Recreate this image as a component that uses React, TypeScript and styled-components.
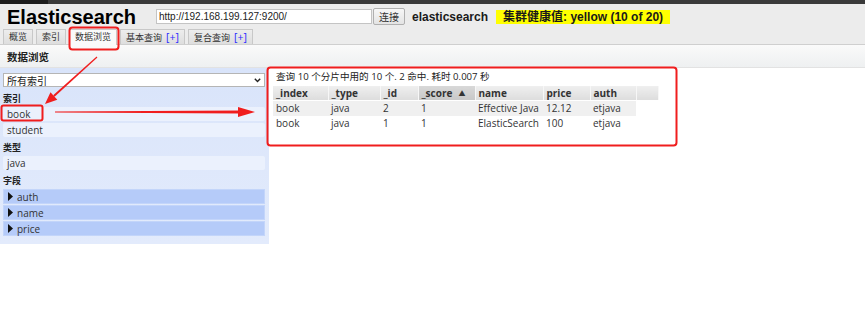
import React from "react";
import styled, { createGlobalStyle } from "styled-components";

const GlobalStyle = createGlobalStyle`
  html, body { margin: 0; padding: 0; background: #fff; }
  body { font-family: "Open Sans", "Noto Sans CJK SC", sans-serif; color: #333; }
  * { box-sizing: border-box; }
`;

const Page = styled.div`
  position: relative;
  width: 865px;
  height: 310px;
  overflow: hidden;
  background: #fff;
`;

const TopStrip = styled.div`
  height: 4px;
  background: linear-gradient(to right, #1d1d1d 0, #1d1d1d 48px, #3a3a3a 48px);
`;

const Header = styled.header`
  background: #ececec;
  height: 40px;
  display: flex;
  flex-direction: column;
`;

const HeaderRow = styled.div`
  display: flex;
  align-items: center;
  height: 25px;
  padding-left: 7px;
`;

const Brand = styled.h1`
  margin: 0;
  font-family: "Liberation Sans", Arial, sans-serif;
  font-weight: bold;
  font-size: 20px;
  line-height: 20px;
  color: #000;
`;

const UrlInput = styled.input`
  margin-left: 20px;
  width: 216px;
  height: 15px;
  border: 1px solid #c4c4c4;
  background: #fff;
  padding: 0 2px;
  font-family: "Liberation Sans", Arial, sans-serif;
  font-size: 10px;
  color: #222;
  outline: none;
`;

const ConnectButton = styled.button`
  margin-left: 1px;
  width: 32px;
  height: 17px;
  padding: 0;
  border: 1px solid #b0b0b0;
  border-radius: 2px;
  background: linear-gradient(#f7f7f7, #e4e4e4);
  font-family: "Noto Sans CJK SC", sans-serif;
  font-size: 10px;
  color: #333;
`;

const ClusterName = styled.span`
  margin-left: 7px;
  font-family: "Liberation Sans", Arial, sans-serif;
  font-weight: bold;
  font-size: 12px;
  color: #1a1a1a;
`;

const Health = styled.span`
  margin-left: 8px;
  height: 14px;
  line-height: 14px;
  padding: 0 7px;
  background: #ffff00;
  font-family: "Liberation Sans", Arial, "Noto Sans CJK SC", sans-serif;
  font-weight: bold;
  font-size: 12px;
  color: #1a1a1a;
`;

const TabRow = styled.nav`
  display: flex;
  align-items: flex-end;
  gap: 3px;
  height: 15px;
  padding-left: 3px;
`;

const Tab = styled.div<{ $active?: boolean }>`
  position: relative;
  height: ${(p) => (p.$active ? 16 : 15)}px;
  margin-bottom: ${(p) => (p.$active ? -1 : 0)}px;
  padding: 0 5px;
  border: 1px solid #c8c8c8;
  border-bottom: none;
  background: ${(p) => (p.$active ? "#fafafa" : "linear-gradient(#ededed, #dedede)")};
  font-size: 9px;
  line-height: 14px;
  color: #333;
  white-space: nowrap;
`;

const Plus = styled.span`
  margin-left: 4px;
  font-size: 10.5px;
  color: #2a2aff;
`;

const Band = styled.div`
  height: 24px;
  border-top: 1px solid #cfcfcf;
  border-bottom: 1px solid #e2e2e2;
  background: linear-gradient(#fafafa, #eef0f1);
  display: flex;
  align-items: center;
  padding-left: 7px;
`;

const BandTitle = styled.h2`
  margin: 0;
  font-size: 10.5px;
  font-weight: bold;
  color: #222;
`;

const Body = styled.div`
  display: flex;
  align-items: flex-start;
`;

const Sidebar = styled.aside`
  width: 269px;
  padding: 5px 4px 8px 3px;
  background: linear-gradient(#d9e4fa, #e3ebfc);
  display: flex;
  flex-direction: column;
`;

const SelectBox = styled.div`
  height: 14px;
  margin-bottom: 1px;
  background: #fff;
  border: 1px solid #b5b5b5;
  display: flex;
  align-items: center;
  justify-content: space-between;
  padding: 0 3px 0 3px;
  font-size: 10px;
  color: #222;
`;

const GroupTitle = styled.div`
  height: 19px;
  line-height: 19px;
  padding-top: 1px;
  font-size: 9px;
  font-weight: bold;
  color: #222;
`;

const Item = styled.div<{ $first?: boolean }>`
  height: 14px;
  line-height: 14px;
  margin-top: ${(p) => (p.$first ? 0 : 2)}px;
  padding-left: 4px;
  background: #ebf1fd;
  border-radius: 2px;
  font-size: 10px;
  color: #333;
`;

const FieldItem = styled.div<{ $first?: boolean }>`
  height: 15px;
  margin-top: ${(p) => (p.$first ? 0 : 1)}px;
  padding-left: 4px;
  background: #b5cbf9;
  border: 1px solid #c3d5fa;
  display: flex;
  align-items: center;
  gap: 4px;
  font-size: 10px;
  color: #333;
`;

const Main = styled.main`
  flex: 1;
  padding: 3px 0 0 4px;
`;

const Summary = styled.div`
  padding-left: 3px;
  height: 12px;
  line-height: 12px;
  font-size: 9.6px;
  color: #222;
  white-space: nowrap;
`;

const Table = styled.table`
  margin-top: 3px;
  border-collapse: collapse;
  table-layout: fixed;
  width: 385px;
`;

const Th = styled.th<{ $sorted?: boolean }>`
  height: 14px;
  padding: 0 3px;
  text-align: left;
  font-size: 10px;
  font-weight: bold;
  color: #333;
  white-space: nowrap;
  background: ${(p) => (p.$sorted ? "linear-gradient(#d8d8d8, #c8c8c8)" : "linear-gradient(#efefef, #dddddd)")};
  border-right: 1px solid #f7f7f7;
  border-bottom: 1px solid #fff;
`;

const SortMark = styled.span`
  margin-left: 6px;
  font-size: 7px;
  vertical-align: 1px;
`;

const Td = styled.td<{ $shaded?: boolean }>`
  height: 15px;
  padding: 0 3px;
  font-size: 10px;
  color: #333;
  white-space: nowrap;
  overflow: hidden;
  background: ${(p) => (p.$shaded ? "#f0f0f0" : "#fff")};
`;

const Overlay = styled.svg`
  position: absolute;
  left: 0;
  top: 0;
  pointer-events: none;
`;

const Chevron = () => (
  <svg width="7" height="5" viewBox="0 0 7 5">
    <path d="M0.8 0.8 L3.5 3.6 L6.2 0.8" fill="none" stroke="#222" strokeWidth="1.4" />
  </svg>
);

const Caret = () => (
  <svg width="5" height="9" viewBox="0 0 5 9">
    <path d="M0 0 L5 4.5 L0 9 Z" fill="#111" />
  </svg>
);

const columns = [
  { key: "_index", w: 55 },
  { key: "_type", w: 52 },
  { key: "_id", w: 38 },
  { key: "_score", w: 57, sorted: true },
  { key: "name", w: 68 },
  { key: "price", w: 47 },
  { key: "auth", w: 46 },
];

const rows = [
  ["book", "java", "2", "1", "Effective Java", "12.12", "etjava"],
  ["book", "java", "1", "1", "ElasticSearch", "100", "etjava"],
];

export default function App() {
  return (
    <Page>
      <GlobalStyle />
      <TopStrip />
      <Header>
        <HeaderRow>
          <Brand>Elasticsearch</Brand>
          <UrlInput defaultValue="http://192.168.199.127:9200/" />
          <ConnectButton>连接</ConnectButton>
          <ClusterName>elasticsearch</ClusterName>
          <Health>集群健康值: yellow (10 of 20)</Health>
        </HeaderRow>
        <TabRow>
          <Tab>概览</Tab>
          <Tab>索引</Tab>
          <Tab $active>数据浏览</Tab>
          <Tab>
            基本查询<Plus>[+]</Plus>
          </Tab>
          <Tab>
            复合查询<Plus>[+]</Plus>
          </Tab>
        </TabRow>
      </Header>
      <Band>
        <BandTitle>数据浏览</BandTitle>
      </Band>
      <Body>
        <Sidebar>
          <SelectBox>
            <span>所有索引</span>
            <Chevron />
          </SelectBox>
          <GroupTitle>索引</GroupTitle>
          <Item $first>book</Item>
          <Item>student</Item>
          <GroupTitle>类型</GroupTitle>
          <Item $first>java</Item>
          <GroupTitle>字段</GroupTitle>
          {["auth", "name", "price"].map((f, i) => (
            <FieldItem key={f} $first={i === 0}>
              <Caret />
              <span>{f}</span>
            </FieldItem>
          ))}
        </Sidebar>
        <Main>
          <Summary>查询 10 个分片中用的 10 个. 2 命中. 耗时 0.007 秒</Summary>
          <Table>
            <colgroup>
              {columns.map((c) => (
                <col key={c.key} style={{ width: c.w }} />
              ))}
              <col style={{ width: 22 }} />
            </colgroup>
            <thead>
              <tr>
                {columns.map((c) => (
                  <Th key={c.key} $sorted={c.sorted}>
                    {c.key}
                    {c.sorted && <SortMark>▲</SortMark>}
                  </Th>
                ))}
                <Th />
              </tr>
            </thead>
            <tbody>
              {rows.map((r, i) => (
                <tr key={i}>
                  {r.map((v, j) => (
                    <Td key={j} $shaded={i === 0}>
                      {v}
                    </Td>
                  ))}
                </tr>
              ))}
            </tbody>
          </Table>
        </Main>
      </Body>
      <Overlay width="865" height="310" viewBox="0 0 865 310">
        <g fill="none" stroke="#f01e1e" strokeWidth="2">
          <rect x="69.5" y="27.5" width="49" height="22" rx="3" />
          <rect x="1.5" y="105.5" width="41" height="15" rx="2" />
          <rect x="267.5" y="67.5" width="409" height="78" rx="3" />
        </g>
        <g fill="#f01e1e">
          <polygon points="97.4,57.4 96.6,56.6 53.2,95.2 54.6,96.8" />
          <polygon points="45,104 50.5,92.2 57.3,99.7" />
          <polygon points="55,111.6 240,110.6 240,113.4 55,112.4" />
          <polygon points="238,107 255,112 238,117" />
        </g>
      </Overlay>
    </Page>
  );
}
